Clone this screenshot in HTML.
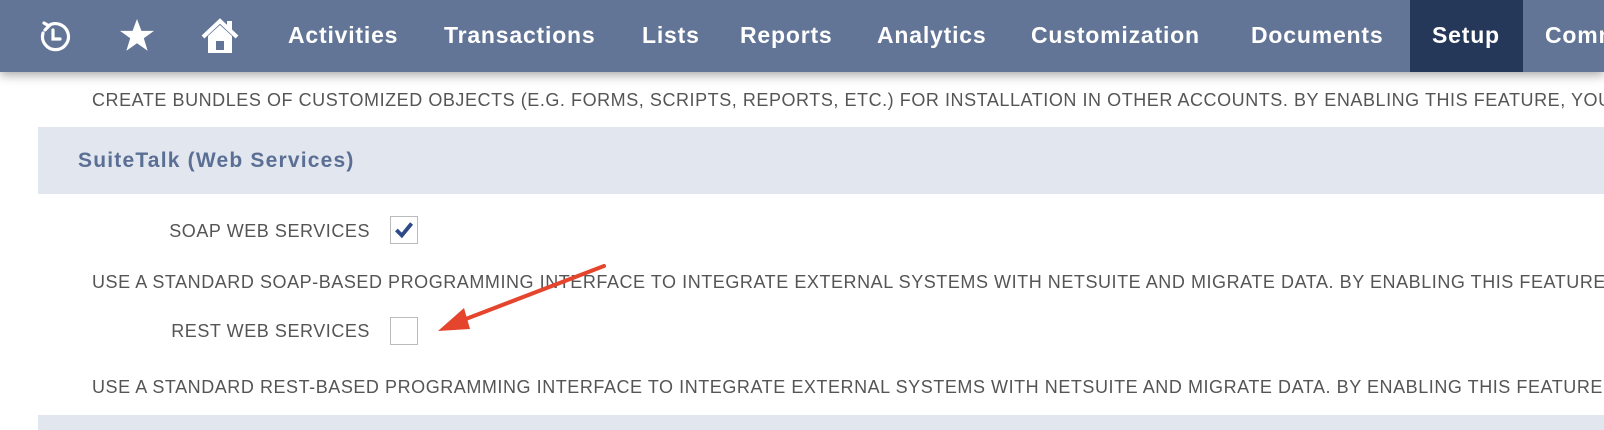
<!DOCTYPE html>
<html><head><meta charset="utf-8"><style>
body{margin:0;width:1604px;height:430px;overflow:hidden;background:#fff;font-family:"Liberation Sans",sans-serif;position:relative}
.nav{position:absolute;left:0;top:0;width:1604px;height:72px;background:#637596;box-shadow:0 3px 10px rgba(0,0,0,.35);z-index:2}
.nav span{position:absolute;top:22px;color:#fff;font-weight:bold;font-size:23px;white-space:nowrap;letter-spacing:0.8px}
.setup{position:absolute;left:1410px;top:0;width:113px;height:72px;background:#263859}
.t{position:absolute;color:#555;font-size:18px;white-space:nowrap;letter-spacing:0.55px}
.band{position:absolute;left:38px;width:1566px;background:#e1e6ef}
.cb{position:absolute;left:390px;width:28px;height:28px;border:1px solid #bbb;background:#fff;box-sizing:border-box}
</style></head><body>
<div class="nav">
<div class="setup"></div>
<svg style="position:absolute;left:38px;top:20px" width="34" height="34" viewBox="0 0 34 34" fill="none" stroke="#fff" stroke-width="3.2" stroke-linecap="round"><path d="M10 6 A13 13 0 1 1 5 13"/><path d="M6 3 L11 6 L7 10"/><path d="M15 10 V19 H22"/></svg>
<svg style="position:absolute;left:119px;top:19px" width="36" height="34" viewBox="0 0 24 23"><path fill="#fff" d="M12 0l3 8h8.5l-6.9 5 2.6 8.5L12 16.4 4.8 21.5 7.4 13 0.5 8H9z"/></svg>
<svg style="position:absolute;left:200px;top:17px" width="40" height="38" viewBox="0 0 40 38"><path fill="none" stroke="#fff" stroke-width="4" d="M3 20 L20 4 L37 20"/><path fill="#fff" d="M27 4h5v9l-5-5z"/><path fill="#fff" d="M8 19 L20 8 L32 19 V36 H8z M16 24 V33 H24 V24z" fill-rule="evenodd"/></svg>
<span style="left:288px">Activities</span>
<span style="left:444px">Transactions</span>
<span style="left:642px">Lists</span>
<span style="left:740px">Reports</span>
<span style="left:877px">Analytics</span>
<span style="left:1031px">Customization</span>
<span style="left:1251px">Documents</span>
<span style="left:1432px">Setup</span>
<span style="left:1545px">Comm</span>
</div>
<div class="t" style="left:92px;top:90px">CREATE BUNDLES OF CUSTOMIZED OBJECTS (E.G. FORMS, SCRIPTS, REPORTS, ETC.) FOR INSTALLATION IN OTHER ACCOUNTS. BY ENABLING THIS FEATURE, YOU</div>
<div class="band" style="top:127px;height:67px"></div>
<div class="t" style="left:78px;top:149px;color:#5b6f95;font-size:21px;font-weight:bold;letter-spacing:1.2px">SuiteTalk (Web Services)</div>
<div class="t" style="right:1234px;top:221px">SOAP WEB SERVICES</div>
<div class="cb" style="top:216px"><svg width="26" height="26" viewBox="0 0 24 24" style="position:absolute;left:0;top:0"><path d="M5 12 L10 17 L19 6" fill="none" stroke="#2c4a88" stroke-width="3.5"/></svg></div>
<div class="t" style="left:92px;top:272px">USE A STANDARD SOAP-BASED PROGRAMMING INTERFACE TO INTEGRATE EXTERNAL SYSTEMS WITH NETSUITE AND MIGRATE DATA. BY ENABLING THIS FEATURE</div>
<div class="t" style="right:1234px;top:321px">REST WEB SERVICES</div>
<div class="cb" style="top:317px"></div>
<div class="t" style="left:92px;top:377px">USE A STANDARD REST-BASED PROGRAMMING INTERFACE TO INTEGRATE EXTERNAL SYSTEMS WITH NETSUITE AND MIGRATE DATA. BY ENABLING THIS FEATURE</div>
<div class="band" style="top:415px;height:15px"></div>
<svg style="position:absolute;left:0;top:0" width="1604" height="430"><line x1="604" y1="266" x2="458" y2="322" stroke="#e5452c" stroke-width="4" stroke-linecap="round"/><path d="M438 331 L464 308 L470 329z" fill="#e5452c"/></svg>
</body></html>
